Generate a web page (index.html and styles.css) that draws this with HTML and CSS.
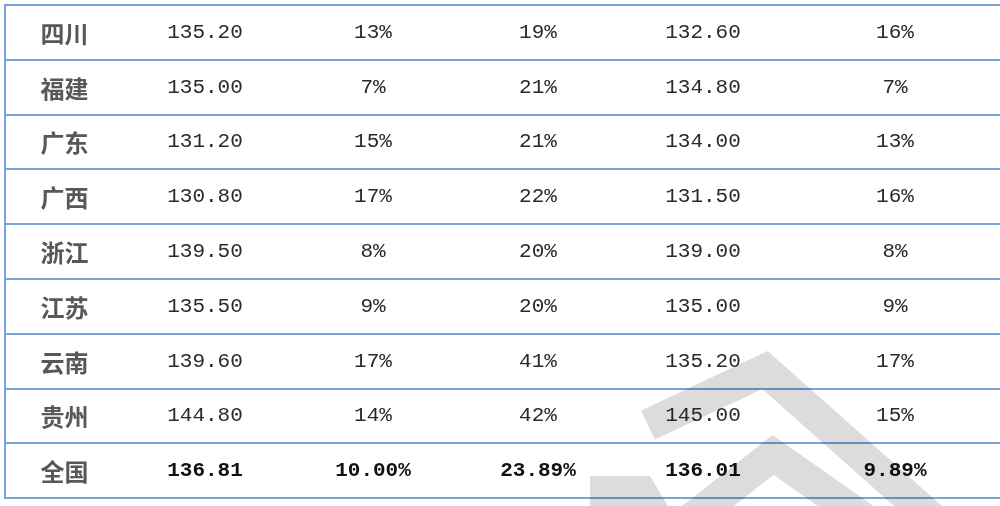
FILE: index.html
```html
<!DOCTYPE html>
<html lang="zh">
<head>
<meta charset="utf-8">
<link rel="stylesheet" href="styles.css">
</head>
<body>
<div class="sheet">
  <table class="data">
    <colgroup>
      <col class="c1"><col class="c2"><col class="c3"><col class="c4"><col class="c5"><col class="c6">
    </colgroup>
    <tbody>
      <tr><td class="prov">四川</td><td>135.20</td><td>13%</td><td>19%</td><td>132.60</td><td>16%</td></tr>
      <tr><td class="prov">福建</td><td>135.00</td><td>7%</td><td>21%</td><td>134.80</td><td>7%</td></tr>
      <tr><td class="prov">广东</td><td>131.20</td><td>15%</td><td>21%</td><td>134.00</td><td>13%</td></tr>
      <tr><td class="prov">广西</td><td>130.80</td><td>17%</td><td>22%</td><td>131.50</td><td>16%</td></tr>
      <tr><td class="prov">浙江</td><td>139.50</td><td>8%</td><td>20%</td><td>139.00</td><td>8%</td></tr>
      <tr><td class="prov">江苏</td><td>135.50</td><td>9%</td><td>20%</td><td>135.00</td><td>9%</td></tr>
      <tr><td class="prov">云南</td><td>139.60</td><td>17%</td><td>41%</td><td>135.20</td><td>17%</td></tr>
      <tr><td class="prov">贵州</td><td>144.80</td><td>14%</td><td>42%</td><td>145.00</td><td>15%</td></tr>
      <tr class="total"><td class="prov">全国</td><td>136.81</td><td>10.00%</td><td>23.89%</td><td>136.01</td><td>9.89%</td></tr>
    </tbody>
  </table>
  <svg class="watermark" width="1000" height="506" viewBox="0 0 1000 506">
    <g fill="none" stroke="#dcdcdc" stroke-width="32" stroke-linejoin="miter">
      <polyline points="648,425 765,370 945,530"/>
      <polyline points="690,520 773,455 880,530"/>
    </g>
    <polygon points="590,476 650,476 668,506 590,506" fill="#dcdcdc"/>
  </svg>
</div>
</body>
</html>
```

FILE: styles.css
```css
html, body {
  margin: 0;
  padding: 0;
  background: #ffffff;
}

.sheet {
  position: relative;
  width: 1000px;
  height: 506px;
  overflow: hidden;
  padding: 4px 0 0 4px;
  box-sizing: border-box;
}

.data {
  border-collapse: collapse;
  table-layout: fixed;
  width: 996px;
  border-left: 2px solid #7aa3da;
  position: relative;
  z-index: 0;
}

.c1 { width: 118px; }
.c2 { width: 164px; }
.c3 { width: 172px; }
.c4 { width: 158px; }
.c5 { width: 172px; }
.c6 { width: 212px; }

.data tr {
  border-top: 2px solid #7aa3da;
  border-bottom: 2px solid #7aa3da;
}

.data td {
  height: 52.8px;
  padding: 0;
  text-align: center;
  vertical-align: middle;
  font-family: "Liberation Mono", monospace;
  font-size: 21px;
  color: #2a2a2a;
  white-space: nowrap;
}

.data td.prov {
  font-family: "Noto Sans CJK SC", sans-serif;
  font-weight: 700;
  font-size: 24px;
  color: #585858;
}

.data tr.total td {
  font-weight: 700;
  color: #111111;
}

.data tr.total td.prov {
  color: #585858;
}

.watermark {
  position: absolute;
  left: 0;
  top: 0;
  pointer-events: none;
  mix-blend-mode: multiply;
}
```
